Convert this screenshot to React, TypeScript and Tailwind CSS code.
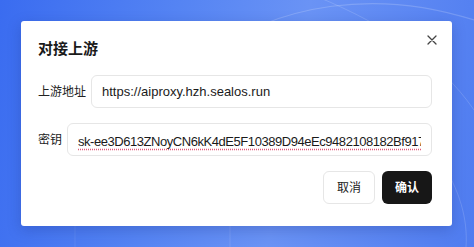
import React from "react";

export default function App() {
  return (
    <div
      className="relative w-[474px] h-[247px] overflow-hidden bg-[linear-gradient(100deg,#3a6cf0_0%,#5584f3_35%,#6a93f5_60%,#4f7cf0_100%)]"
      style={{ fontFamily: '"Noto Sans", "Noto Sans CJK SC", sans-serif' }}
    >
      <svg className="absolute inset-0" width="474" height="247" viewBox="0 0 474 247" fill="none">
        <path d="M200 60 C 280 0, 380 -10, 474 20" stroke="rgba(255,255,255,0.18)" strokeWidth="1.2" />
        <path d="M300 -10 C 380 20, 440 60, 474 110" stroke="rgba(255,255,255,0.15)" strokeWidth="1" />
        <path d="M440 160 C 460 190, 468 220, 466 247" stroke="rgba(255,255,255,0.15)" strokeWidth="1" />
        <path d="M75 247 L75 226" stroke="rgba(255,255,255,0.08)" strokeWidth="1" />
        <path d="M230 247 L230 226" stroke="rgba(255,255,255,0.12)" strokeWidth="1" />
      </svg>
      <div className="relative pt-[21px] pl-[21px]">
        <div className="relative w-[431px] h-[205px] bg-white rounded-[3px] shadow-[0_4px_14px_rgba(20,40,120,0.25)] pl-[17px] pr-[20px] pt-[15px] flex flex-col">
          <div className="text-[15px] leading-[24px] font-semibold text-[#1a1a1a]">对接上游</div>
          <button className="absolute top-[13px] right-[14px] w-[12px] h-[12px] flex items-center justify-center text-[#444]">
            <svg width="10" height="10" viewBox="0 0 10 10" fill="none">
              <path d="M1 1 L9 9 M9 1 L1 9" stroke="currentColor" strokeWidth="1.3" strokeLinecap="round" />
            </svg>
          </button>
          <div className="mt-[15px] flex items-center gap-[5px]">
            <span className="text-[12px] text-[#222] whitespace-nowrap">上游地址</span>
            <div className="flex-1 h-[33px] border border-[#e6e6e6] rounded-[6px] flex items-center px-[10px] overflow-hidden">
              <span className="text-[13px] text-[#1a1a1a] whitespace-nowrap" style={{ fontFamily: '"Liberation Sans", sans-serif' }}>
                https://aiproxy.hzh.sealos.run
              </span>
            </div>
          </div>
          <div className="mt-[15px] flex items-center gap-[5px]">
            <span className="text-[12px] text-[#222] whitespace-nowrap">密钥</span>
            <div className="flex-1 h-[33px] border border-[#e6e6e6] rounded-[6px] flex items-center pl-[10px] pr-[10px] overflow-hidden">
              <div className="overflow-hidden w-full">
                <span
                  className="text-[13px] tracking-[-0.45px] text-[#1a1a1a] whitespace-nowrap underline decoration-dotted decoration-[#e05a7a] underline-offset-[3px]"
                  style={{ fontFamily: '"Liberation Sans", sans-serif' }}
                >
                  sk-ee3D613ZNoyCN6kK4dE5F10389D94eEc9482108182Bf917a3c
                </span>
              </div>
            </div>
          </div>
          <div className="mt-[15px] flex justify-end gap-[7px]">
            <button className="w-[52px] h-[33px] border border-[#e6e6e6] rounded-[6px] text-[12px] text-[#222] bg-white">取消</button>
            <button className="w-[50px] h-[33px] rounded-[6px] text-[12px] text-white font-semibold bg-[#171717]">确认</button>
          </div>
        </div>
      </div>
    </div>
  );
}
